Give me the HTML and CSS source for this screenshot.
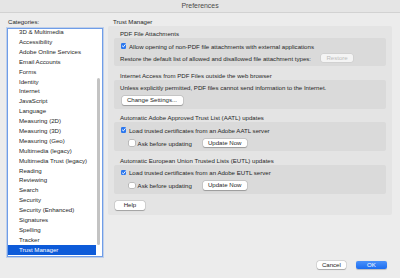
FILE: index.html
```html
<!DOCTYPE html>
<html>
<head>
<meta charset="utf-8">
<title>Preferences</title>
<link rel="stylesheet" href="styles.css">
</head>
<body>
<div class="window">
  <header class="titlebar">Preferences</header>
  <div class="main">
    <section class="cats">
      <div class="cats-label">Categories:</div>
      <div class="listbox">
        <ul class="items">
          <li>3D &amp; Multimedia</li>
          <li>Accessibility</li>
          <li>Adobe Online Services</li>
          <li>Email Accounts</li>
          <li>Forms</li>
          <li>Identity</li>
          <li>Internet</li>
          <li>JavaScript</li>
          <li>Language</li>
          <li>Measuring (2D)</li>
          <li>Measuring (3D)</li>
          <li>Measuring (Geo)</li>
          <li>Multimedia (legacy)</li>
          <li>Multimedia Trust (legacy)</li>
          <li>Reading</li>
          <li>Reviewing</li>
          <li>Search</li>
          <li>Security</li>
          <li>Security (Enhanced)</li>
          <li>Signatures</li>
          <li>Spelling</li>
          <li>Tracker</li>
          <li class="sel">Trust Manager</li>
        </ul>
        <div class="scroll"><div class="thumb"></div></div>
      </div>
    </section>
    <section class="panel">
      <div class="panel-label">Trust Manager</div>
      <div class="outer">
        <div class="group-label first">PDF File Attachments</div>
        <div class="group g1">
          <div class="row"><span class="cb on"><svg viewBox="0 0 10 10"><path d="M2.4 5.3 L4.3 7.1 L7.7 2.9"/></svg></span><span>Allow opening of non-PDF file attachments with external applications</span></div>
          <div class="row"><span>Restore the default list of allowed and disallowed file attachment types:</span><button class="btn disabled restore">Restore</button></div>
        </div>

        <div class="group-label">Internet Access from PDF Files outside the web browser</div>
        <div class="group">
          <div class="row"><span>Unless explicitly permitted, PDF files cannot send information to the Internet.</span></div>
          <div class="row"><button class="btn change">Change Settings...</button></div>
        </div>

        <div class="group-label">Automatic Adobe Approved Trust List (AATL) updates</div>
        <div class="group">
          <div class="row"><span class="cb on"><svg viewBox="0 0 10 10"><path d="M2.4 5.3 L4.3 7.1 L7.7 2.9"/></svg></span><span>Load trusted certificates from an Adobe AATL server</span></div>
          <div class="row sub"><span class="ask"><span class="cb off"></span><span>Ask before updating</span></span><button class="btn update">Update Now</button></div>
        </div>

        <div class="group-label">Automatic European Union Trusted Lists (EUTL) updates</div>
        <div class="group">
          <div class="row"><span class="cb on"><svg viewBox="0 0 10 10"><path d="M2.4 5.3 L4.3 7.1 L7.7 2.9"/></svg></span><span>Load trusted certificates from an Adobe EUTL server</span></div>
          <div class="row sub"><span class="ask"><span class="cb off"></span><span>Ask before updating</span></span><button class="btn update">Update Now</button></div>
        </div>

        <button class="btn help">Help</button>
      </div>
    </section>
  </div>
  <footer class="footer">
    <button class="btn cancel">Cancel</button>
    <button class="btn ok">OK</button>
  </footer>
</div>
</body>
</html>
```
FILE: styles.css
```css
html, body {
  margin: 0;
  padding: 0;
}
body {
  width: 400px;
  height: 278px;
  overflow: hidden;
  background: #ececec;
  font-family: "Liberation Sans", Arial, sans-serif;
  font-size: 6.1px;
  color: #262626;
}
.window {
  display: flex;
  flex-direction: column;
  height: 278px;
}
.titlebar {
  height: 12px;
  line-height: 12px;
  border-bottom: 1px solid #d2d2d2;
  background: #e5e5e5;
  text-align: center;
  font-size: 6.9px;
  color: #4a4a4a;
}
.main {
  display: flex;
  gap: 5px;
  padding: 5px 8px 0 7px;
}
.cats {
  width: 96px;
  display: flex;
  flex-direction: column;
}
.cats-label {
  height: 8px;
  line-height: 8px;
  padding-left: 1px;
  margin-bottom: 2px;
}
.listbox {
  height: 227px;
  border: 1px solid #6f9de8;
  box-shadow: 0 0 0 1px rgba(111, 157, 232, 0.35);
  background: #fff;
  display: flex;
  overflow: hidden;
}
.items {
  list-style: none;
  margin: -1.95px 0 0 0;
  padding: 0;
  flex: 1;
}
.items li {
  height: 9.9px;
  line-height: 9.9px;
  padding-left: 11px;
  white-space: nowrap;
}
.items li.sel {
  background: #0d5bd9;
  color: #fff;
}
.scroll {
  width: 6px;
  padding-top: 49px;
}
.thumb {
  width: 3px;
  height: 167px;
  margin-left: 1px;
  background: #c3c3c3;
  border-radius: 1.5px;
}
.panel {
  width: 284px;
  display: flex;
  flex-direction: column;
}
.panel-label {
  height: 8px;
  line-height: 8px;
  padding-left: 5px;
}
.outer {
  background: #e4e4e4;
  border-radius: 2px;
  padding: 4px 6px 5px 6px;
  display: flex;
  flex-direction: column;
}
.group-label {
  height: 8px;
  line-height: 8px;
  padding-left: 6px;
  margin-top: 5.5px;
}
.group-label.first {
  margin-top: 0;
}
.group {
  background: #dadada;
  border-radius: 2px;
  padding: 3.5px 6px;
  display: flex;
  flex-direction: column;
  gap: 4px;
}
.group.g1 {
  gap: 3px;
}
.row {
  height: 9px;
  display: flex;
  align-items: center;
  white-space: nowrap;
}
.row.sub {
  padding-left: 9.3px;
}
.cb {
  width: 5.5px;
  height: 5.5px;
  border-radius: 1.3px;
  margin-left: 0.7px;
  margin-right: 2.8px;
  flex: none;
  display: inline-flex;
}
.cb svg {
  width: 5.5px;
  height: 5.5px;
}
.cb svg path {
  fill: none;
  stroke: #fff;
  stroke-width: 1.7;
  stroke-linecap: round;
  stroke-linejoin: round;
}
.cb.on {
  background: #2b77ee;
}
.cb.off {
  background: #fff;
  box-shadow: 0 0 0 0.5px rgba(0, 0, 0, 0.28);
  margin-left: 0;
}
.ask {
  width: 73.4px;
  flex: none;
  display: flex;
  align-items: center;
}
.btn {
  height: 8.6px;
  line-height: 8.6px;
  padding: 0;
  border: 0;
  background: #fff;
  border-radius: 2px;
  box-shadow: 0 0 0 0.5px rgba(0, 0, 0, 0.16), 0 0.5px 0.8px rgba(0, 0, 0, 0.22);
  text-align: center;
  font-family: inherit;
  font-size: 6.1px;
  color: #262626;
  flex: none;
}
.btn.disabled {
  background: #f4f4f4;
  color: #bcbcbc;
  box-shadow: 0 0 0 0.5px rgba(0, 0, 0, 0.08);
}
.restore {
  width: 32px;
  margin-left: 10px;
}
.change {
  width: 61px;
  margin-left: 1.5px;
}
.update {
  width: 44px;
}
.help {
  width: 30px;
  margin: 7.5px 0 0 1px;
  align-self: flex-start;
}
.footer {
  display: flex;
  justify-content: flex-end;
  gap: 10px;
  padding: 3.7px 13.3px 0 0;
}
.cancel {
  width: 29.3px;
}
.ok {
  width: 30.7px;
  color: #fff;
  background: linear-gradient(#4a91fa, #1c6df0);
  box-shadow: 0 0.5px 0.8px rgba(0, 0, 0, 0.2);
}
```
